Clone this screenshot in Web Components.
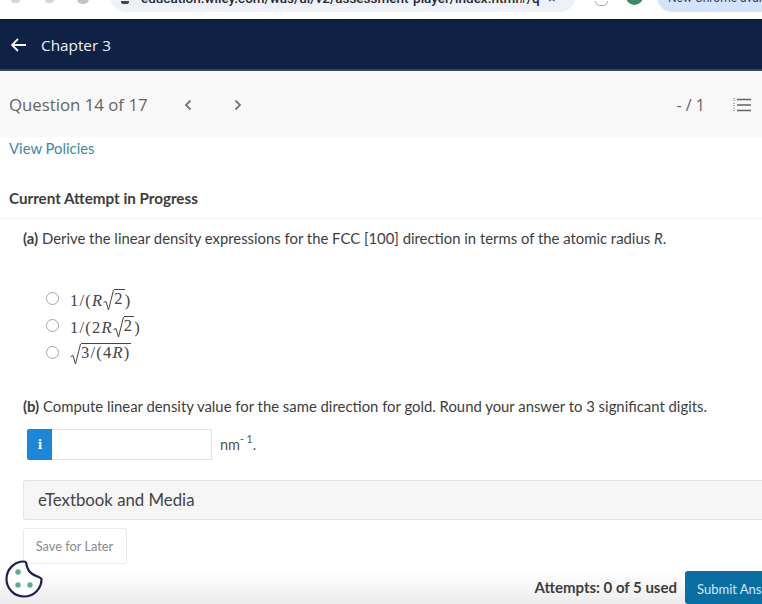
<!DOCTYPE html>
<html>
<head>
<meta charset="utf-8">
<title>Chapter 3</title>
<style>
html, body { margin: 0; height: 100%; }
body { width: 762px; height: 604px; overflow: hidden; position: relative; background: #fff; font-family: Lato, sans-serif; color: #3d3d3d; }
</style>
</head>
<body>
<browser-strip></browser-strip>
<chapter-bar>Chapter 3</chapter-bar>
<question-bar></question-bar>
<question-body></question-body>
<attempt-footer></attempt-footer>
<cookie-badge></cookie-badge>

<script>
let define = (name, html) => {
  customElements.define(name, class extends HTMLElement {
    constructor () {
      super()
      this.attachShadow({mode: 'open'}).innerHTML = html
    }
  })
}

define('browser-strip', `
  <style>
  :host { display: flex; height: 19px; overflow: hidden; background: #fff; align-items: flex-end; font: 12px/12px Roboto, sans-serif; color: #3c4043; box-sizing: border-box; }
  .nav { width: 110px; flex: none; display: flex; align-items: flex-end; padding: 0 0 16px 11px; box-sizing: border-box; gap: 25px; }
  .nav span { width: 9px; height: 3px; background: #d6d6d6; border-radius: 0 0 4px 4px; flex: none; }
  .nav span:last-child { width: 12px; height: 5px; margin-bottom: -1px; margin-left: -2px; background: #c2c2c2; border-radius: 0 0 6px 6px; }
  .pill { width: 466px; flex: none; height: 32px; margin-bottom: 7px; border-radius: 0 0 16px 16px; background: #eff1f8; display: flex; align-items: flex-end; padding: 0 0 7px 31px; box-sizing: border-box; white-space: nowrap; overflow: hidden; font-size: 13.500px; line-height: 14px; color: #26282c; font-weight: 500; position: relative; }
  .lock { position: absolute; left: 11px; bottom: 8px; width: 8px; height: 3px; background: #444; border-radius: 0 0 2px 2px; }
  .star { position: absolute; left: 436px; bottom: 7px; font-size: 13px; color: #444; }
  .tail { flex: 1; display: flex; align-items: flex-end; }
  .ext { width: 13px; height: 5px; margin: 0 0 13px 19px; border: 1.500px solid #aaa; border-top: 0; border-radius: 0 0 5px 5px; box-sizing: border-box; flex: none; }
  .avatar { width: 17px; height: 17px; border-radius: 50%; background: #3b8a63; margin: 0 14px 14px 18px; flex: none; }
  .news { flex: 1; height: 30px; margin-bottom: 7px; background: #d3e3fd; border-radius: 0 0 0 15px; padding: 0 0 8px 11px; box-sizing: border-box; display: flex; align-items: flex-end; white-space: nowrap; overflow: hidden; color: #33415c; font-size: 12px; }
  </style>
  <div class="nav"><span></span><span></span><span></span></div>
  <div class="pill"><span class="lock"></span><span>education.wiley.com/was/ui/v2/assessment-player/index.html#/q</span><span class="star">★</span></div>
  <div class="tail"><span class="ext"></span><span class="avatar"></span><span class="news">New Chrome available</span></div>`)

define('chapter-bar', `
  <style>
  :host { display: flex; align-items: center; gap: 14px; height: 52px; padding: 0 0 0 10px; box-sizing: border-box; background: #0f2144; border-top: 1px solid #0b1a33; border-bottom: 2px solid #3b4358; color: #eef2f8; font: 500 15.300px "Open Sans", sans-serif; }
  svg { width: 17px; height: 16px; flex: none; }
  </style>
  <svg viewBox="0 0 17 16" fill="none" stroke="#f4f6fa" stroke-width="1.8"><path d="M16 8H2M8 2 2 8l6 6"/></svg>
  <slot></slot>`)

define('question-bar', `
  <style>
  :host { display: flex; align-items: center; height: 66px; padding: 1px 11px 0 9px; box-sizing: border-box; background: #f8f8f8; color: #666; font: 16.800px "Open Sans", sans-serif; }
  .pager { display: flex; gap: 40px; margin-left: 35px; }
  .pager svg { width: 10px; height: 12px; display: block; }
  .score { margin-left: auto; margin-right: 28px; font-size: 16px; }
  .list { width: 18px; height: 16px; display: block; }
  </style>
  <span>Question 14 of 17</span>
  <div class="pager">
    <svg viewBox="0 0 10 12" fill="none" stroke="#777" stroke-width="1.8"><path d="M7.500 1.500 3 6l4.500 4.500"/></svg>
    <svg viewBox="0 0 10 12" fill="none" stroke="#777" stroke-width="1.8"><path d="M2.500 1.500 7 6l-4.500 4.500"/></svg>
  </div>
  <span class="score">- / 1</span>
  <svg class="list" viewBox="0 0 18 16" fill="none" stroke="#666"><path stroke-width="1.500" d="M4 2.500h14M4 8h14M4 13.500h14"/><path stroke-width="1" stroke-dasharray="1 1" d="M1 1v4M1 6v4M1 11v4"/></svg>`)

define('math-root', `
  <style>
  :host { display: inline-flex; align-items: flex-end; vertical-align: -5px; }
  svg { width: 11px; height: 22px; display: block; flex: none; }
  .in { border-top: 1px solid #444; line-height: 17px; height: 17px; padding: 0 1px 0 0; margin-bottom: 4px; }
  </style>
  <svg viewBox="0 0 11 22" fill="none" stroke="#444"><path d="M0.500 13.500 3 12.500 5.500 21 10.500 1"/></svg>
  <span class="in"><slot></slot></span>`)

define('radio-option', `
  <style>
  :host { display: flex; align-items: center; height: 27px; padding-left: 25px; font: 16.500px "Liberation Serif", serif; color: #444; letter-spacing: 1.200px; }
  .dot { width: 13px; height: 13px; border: 1.500px solid #a6a6a6; border-radius: 50%; box-sizing: border-box; background: #fff; margin: -3px 11px 0 -1px; flex: none; }
  </style>
  <span class="dot"></span><span><slot></slot></span>`)

define('question-body', `
  <style>
  :host { display: block; height: 467px; font: 14.870px Lato, sans-serif; color: #3d3d3d; }
  .policies { display: block; padding: 3px 0 0 9px; line-height: 17px; color: #3e87a6; }
  h2 { margin: 33px 0 0; padding: 0 0 11px 9px; font: 700 15.200px/17px Lato, sans-serif; border-bottom: 1px solid #f1f1f1; }
  .part { margin: 0; padding-left: 23px; line-height: 17px; }
  .a { margin-top: 11px; }
  .options { margin-top: 39px; padding-left: 22px; }
  .b { margin-top: 31px; }
  .answer { display: flex; align-items: center; margin: 14px 0 0 27px; height: 31px; }
  .info { width: 25px; height: 31px; background: #1a87d8; color: #fff; border-radius: 2px 0 0 2px; display: flex; align-items: center; justify-content: center; font: 700 12px "DejaVu Serif", serif; flex: none; padding-left: 1px; box-sizing: border-box; }
  .field { width: 160px; height: 31px; box-sizing: border-box; border: 1.500px solid #e2e2e2; border-left: 0; background: #fff; flex: none; }
  .unit { margin-left: 8px; font-size: 14.500px; color: #555; }
  sup { font-size: 10.500px; line-height: 0; position: relative; top: -1px; vertical-align: super; }
  .media { margin: 20px 0 0 23px; height: 40px; box-sizing: border-box; display: flex; align-items: center; padding: 0 0 1px 14px; background: #f6f6f6; border: 1px solid #e4e4e4; border-right: 0; border-radius: 3px 0 0 3px; font-size: 16.800px; color: #444; }
  .save { display: flex; align-items: center; justify-content: center; width: 104px; height: 36px; box-sizing: border-box; margin: 8px 0 0 23px; border: 1px solid #eaeaea; border-radius: 3px; background: #fff; color: #888; font-size: 12.800px; padding-right: 1px; }
  </style>
  <span class="policies">View Policies</span>
  <h2>Current Attempt in Progress</h2>
  <p class="part a"><b>(a)</b> Derive the linear density expressions for the FCC [100] direction in terms of the atomic radius <i>R</i>.</p>
  <div class="options">
    <radio-option>1/(<i>R</i><math-root>2</math-root>)</radio-option>
    <radio-option>1/(2<i>R</i><math-root>2</math-root>)</radio-option>
    <radio-option><math-root>3/(4<i>R</i>)</math-root></radio-option>
  </div>
  <p class="part b"><b>(b)</b> Compute linear density value for the same direction for gold. Round your answer to 3 significant digits.</p>
  <div class="answer">
    <span class="info">i</span><span class="field"></span>
    <span class="unit">nm<sup>- 1</sup>.</span>
  </div>
  <div class="media">eTextbook and Media</div>
  <div class="save">Save for Later</div>`)

define('cookie-badge', `
  <style>
  :host { display: block; position: absolute; left: 5px; top: 560px; width: 38px; height: 38px; }
  svg { width: 38px; height: 38px; display: block; }
  </style>
  <svg viewBox="0 0 38 38">
    <path fill="#fff" stroke="#221f50" stroke-width="2.200" stroke-linejoin="round" d="M19 1.500c1.300 0 1.800.2 2 1 .7 3.600 1.400 6.500 3.500 9 2 2.600 5 4 8 5 1 .5 3.500 1.500 4 2.500C36.500 29 28.700 36.500 19 36.500S1.500 28.700 1.500 19 9.300 1.500 19 1.500Z"/>
    <circle cx="13" cy="12" r="2.700" fill="#4fb58f"/><circle cx="13" cy="25" r="2.700" fill="#4fb58f"/><circle cx="25" cy="25" r="2.700" fill="#4fb58f"/>
  </svg>`)

define('attempt-footer', `
  <style>
  :host { display: flex; position: absolute; left: 0; right: 0; bottom: 0; height: 33px; justify-content: flex-end; align-items: flex-end; font-family: Lato, sans-serif; background: linear-gradient(#fff0, #ececec); }
  .used { font-weight: 700; font-size: 15px; color: #3d3d3d; margin: 0 8px 8px 0; }
  .submit { width: 77px; height: 33px; flex: none; overflow: hidden; box-sizing: border-box; background: #0a6fa0; color: #cfeaf8; border-radius: 3px 0 0 3px; font-size: 13px; line-height: 36px; padding-left: 12px; white-space: nowrap; }
  </style>
  <span class="used">Attempts: 0 of 5 used</span>
  <span class="submit">Submit Answer</span>`)
</script>
</body>
</html>
